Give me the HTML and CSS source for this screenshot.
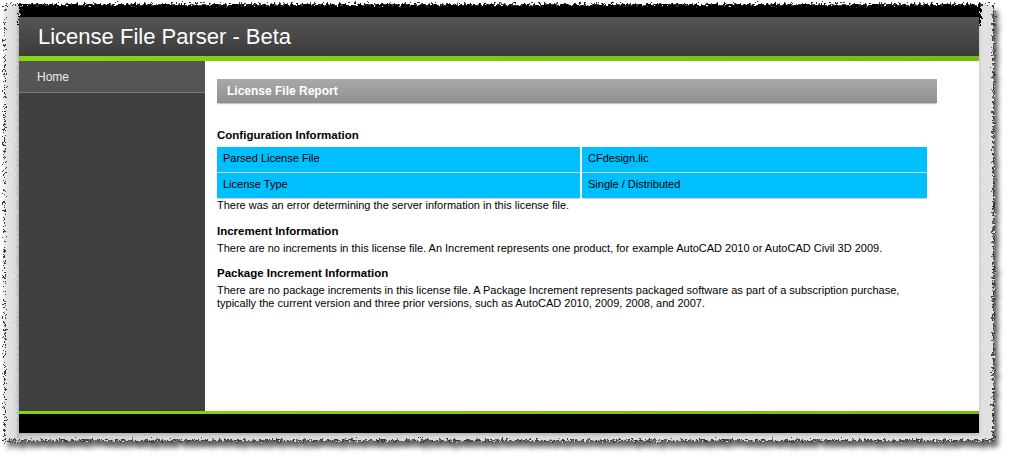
FILE: index.html
```html
<!DOCTYPE html>
<html lang="en">
<head>
<meta charset="utf-8">
<title>License File Parser - Beta</title>
<link rel="stylesheet" href="styles.css">
</head>
<body>
<svg class="defs" aria-hidden="true">
  <filter id="torn" x="-3%" y="-6%" width="108%" height="116%">
    <feTurbulence type="fractalNoise" baseFrequency="0.4" numOctaves="3" seed="7" result="noise"/>
    <feDisplacementMap in="SourceGraphic" in2="noise" scale="9" xChannelSelector="R" yChannelSelector="G" result="torn"/>
    <feDropShadow in="torn" dx="4" dy="6" stdDeviation="2.5" flood-color="#000" flood-opacity="0.6"/>
  </filter>
</svg>
<div class="sheet">
  <div class="page">
    <div class="topband"></div>
    <header class="header"><h1 class="title">License File Parser - Beta</h1></header>
    <div class="green"></div>
    <div class="main">
      <nav class="sidebar">
        <a class="nav-item" href="#">Home</a>
      </nav>
      <section class="content">
        <div class="report-bar">License File Report</div>
        <h2 class="section-title first">Configuration Information</h2>
        <div class="kv">
          <div class="cell">Parsed License File</div>
          <div class="cell">CFdesign.lic</div>
          <div class="cell">License Type</div>
          <div class="cell">Single / Distributed</div>
        </div>
        <p class="text error">There was an error determining the server information in this license file.</p>
        <h2 class="section-title">Increment Information</h2>
        <p class="text">There are no increments in this license file. An Increment represents one product, for example AutoCAD 2010 or AutoCAD Civil 3D 2009.</p>
        <h2 class="section-title second">Package Increment Information</h2>
        <p class="text">There are no package increments in this license file. A Package Increment represents packaged software as part of a subscription purchase,<br>typically the current version and three prior versions, such as AutoCAD 2010, 2009, 2008, and 2007.</p>
      </section>
    </div>
    <div class="green thin"></div>
    <footer class="footer"></footer>
  </div>
</div>
</body>
</html>
```
FILE: styles.css
```css
html, body {
  margin: 0;
  padding: 0;
  background: #ffffff;
}
body {
  font-family: "Liberation Sans", Arial, sans-serif;
  color: #000;
  width: 1014px;
  height: 466px;
  overflow: hidden;
}
.defs {
  position: absolute;
  width: 0;
  height: 0;
}
.sheet {
  position: relative;
  margin: 4px 0 0 4px;
  width: 960px;
  padding: 0 15px 8px 15px;
  z-index: 0;
}
.sheet::before {
  content: "";
  position: absolute;
  left: 0;
  top: 0;
  right: 0;
  bottom: 0;
  box-sizing: border-box;
  border: 1px solid #3a3a3a;
  background:
    linear-gradient(#000, #000) 14px 0 / 962px 20px no-repeat,
    linear-gradient(90deg, #e6e6e6 0, #dcdcdc 10px, #bdbdbd 15px, #d6d6d6 16px, #e0e0e0 100%);
  filter: url(#torn);
  z-index: -1;
}
.page {
  display: flex;
  flex-direction: column;
  width: 960px;
  box-shadow: 0 2px 3px rgba(0,0,0,0.18);
}
.topband {
  height: 13px;
}
.header {
  height: 39px;
  background: linear-gradient(#555555, #3b3b3b);
  padding-left: 19px;
}
.title {
  margin: 0;
  font-size: 22px;
  font-weight: normal;
  line-height: 38px;
  color: #ffffff;
  padding-top: 1px;
}
.green {
  height: 5px;
  background: linear-gradient(90deg, #86d60f, #76bd10);
}
.green.thin {
  height: 3px;
}
.main {
  display: flex;
  height: 350px;
}
.sidebar {
  width: 186px;
  background: #404040;
  display: flex;
  flex-direction: column;
}
.nav-item {
  height: 30px;
  line-height: 30px;
  padding: 1px 0 0 18px;
  background: #555555;
  border-bottom: 1px solid #7c7c7c;
  color: #ececec;
  font-size: 12px;
  text-decoration: none;
}
.content {
  flex: 1;
  background: #ffffff;
  padding: 18px 0 0 12px;
}
.report-bar {
  width: 710px;
  height: 24px;
  line-height: 24px;
  padding-left: 10px;
  background: linear-gradient(#a9a9a9, #8f8f8f);
  color: #ffffff;
  font-size: 12px;
  font-weight: bold;
  box-shadow: 0 2px 1px -1px #c4c4c4;
}
.section-title {
  margin: 11.5px 0 4px 0;
  font-size: 11.5px;
  font-weight: bold;
  line-height: 14px;
}
.section-title.first {
  margin-top: 25px;
  margin-bottom: 5px;
}
.section-title.second {
  margin-top: 12px;
}
.kv {
  display: grid;
  grid-template-columns: 363px 345px;
  column-gap: 2px;
  width: 710px;
}
.cell {
  height: 23px;
  line-height: 23px;
  padding: 0 0 2px 6px;
  background: #00bfff;
  border-bottom: 1px solid #d2d2d2;
  font-size: 11px;
}
.text {
  margin: 0;
  font-size: 11px;
  line-height: 12.5px;
}
.text.error {
  line-height: 13px;
}
.footer {
  height: 19px;
  background: #000000;
}
```
